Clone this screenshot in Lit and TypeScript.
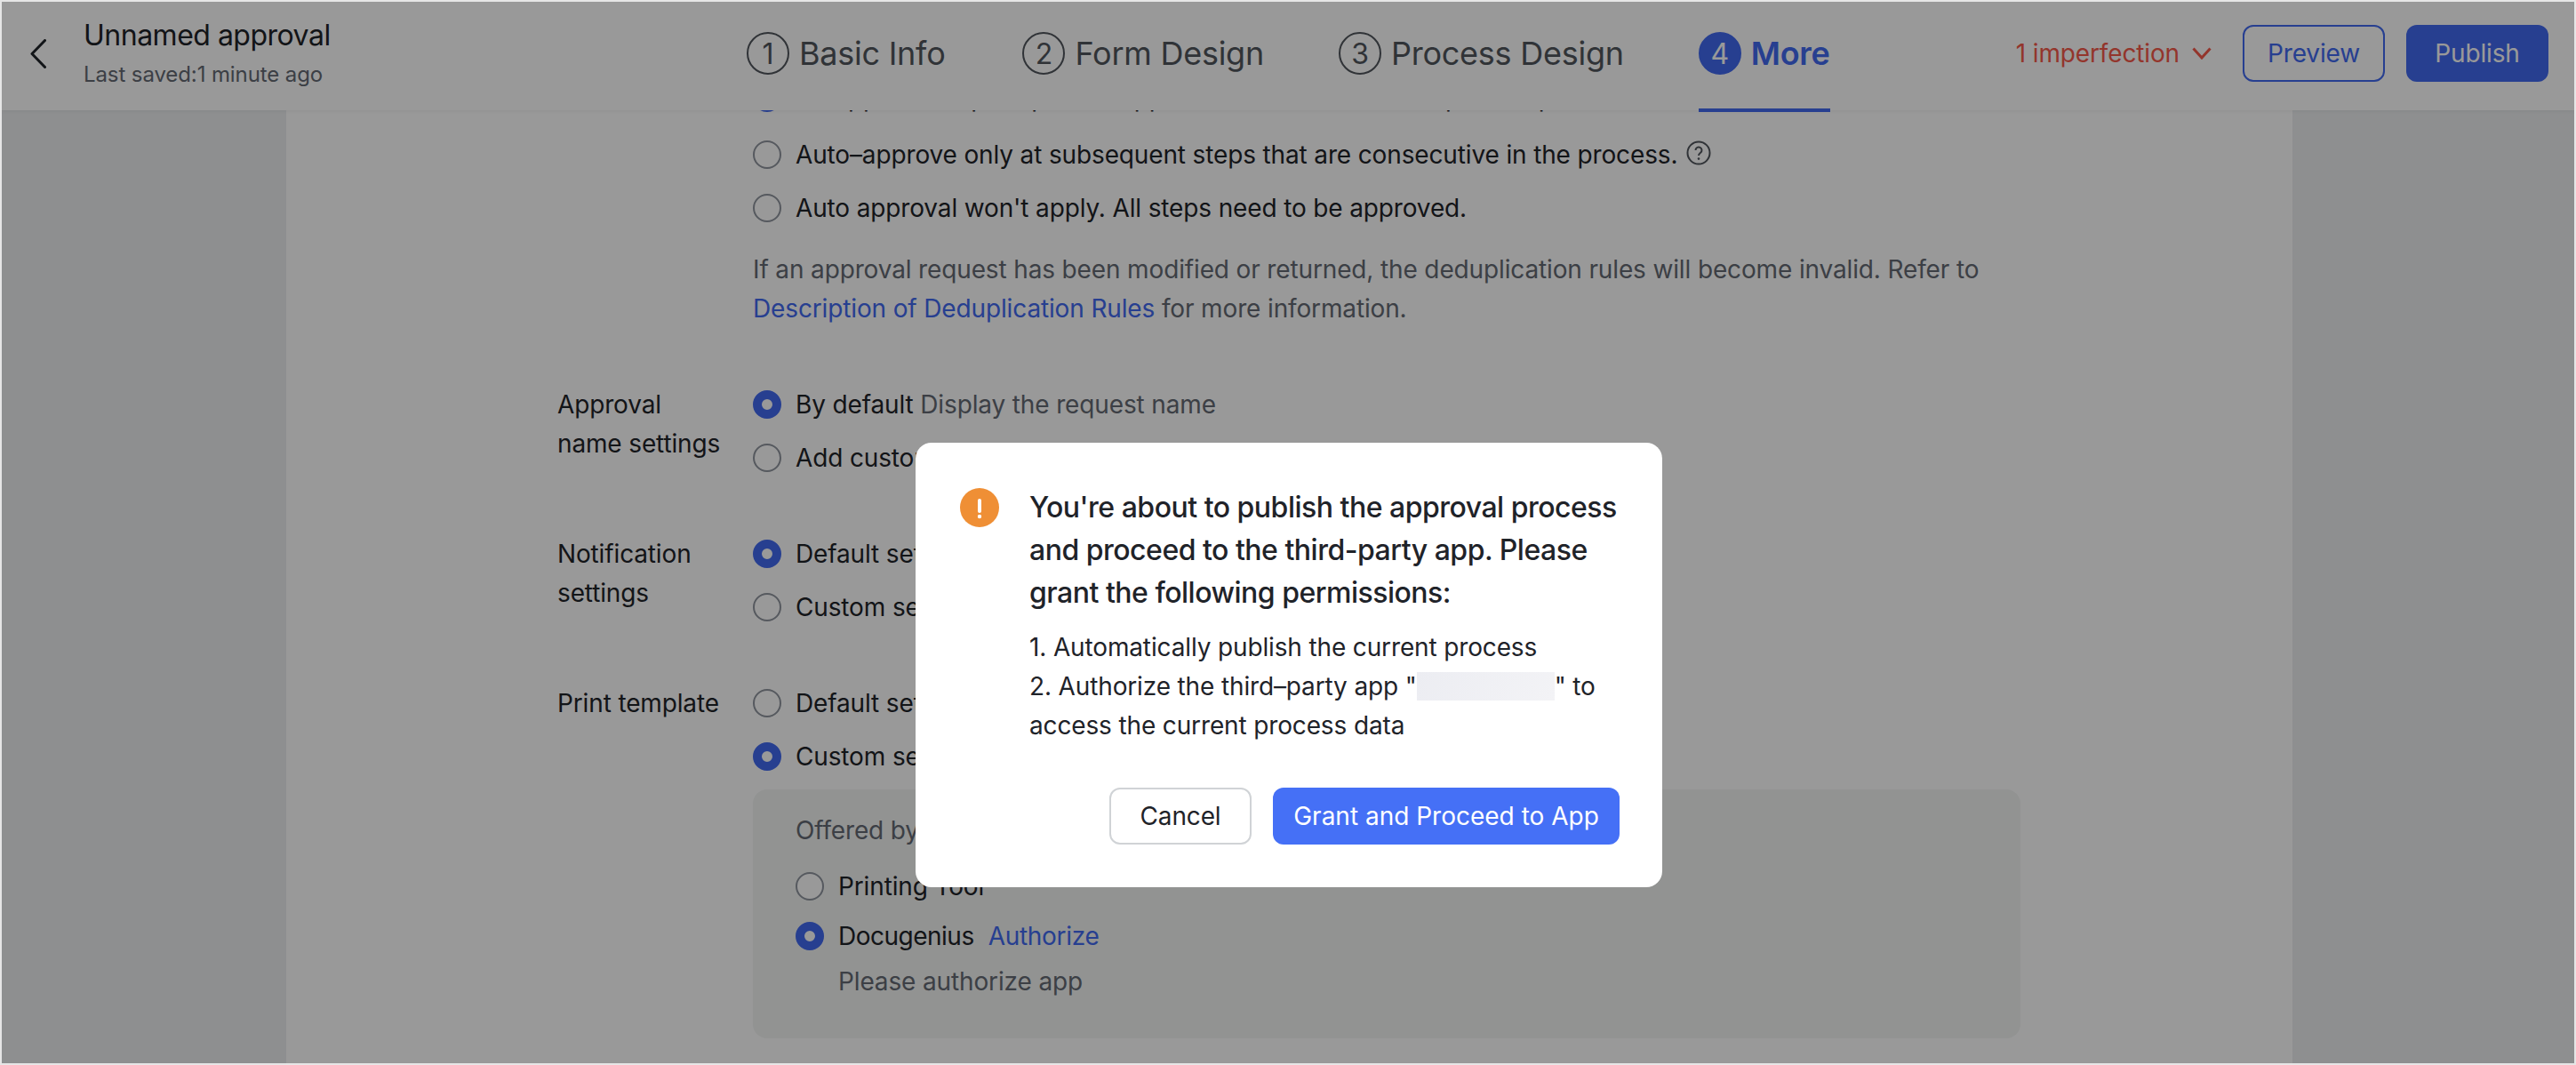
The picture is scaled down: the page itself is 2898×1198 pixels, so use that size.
import { LitElement, html, css } from 'lit';
import { customElement } from 'lit/decorators.js';

const radio = (on = false) => html`<span class="radio ${on ? 'on' : ''}"></span>`;

@customElement('app-root')
export class AppRoot extends LitElement {
  static styles = css`
    :host {
      display: block;
      width: 2898px;
      height: 1198px;
      font-family: Inter, 'Liberation Sans', sans-serif;
      font-size: 28px;
      letter-spacing: -0.14px;
      color: #1f2329;
      background: #fff;
    }
    * { box-sizing: border-box; }
    .page {
      position: relative;
      width: 100%;
      height: 100%;
      border: 2px solid #e6e6e6;
      display: flex;
      flex-direction: column;
      overflow: hidden;
      background: #edeef0;
    }

    /* top bar */
    .bar {
      height: 122px;
      flex: none;
      position: relative;
      z-index: 1;
      background: #fff;
      display: flex;
      align-items: center;
      padding: 0 29px 6px 32px;
      box-shadow: 0 1px 4px rgba(0, 0, 0, 0.06);
    }
    .back { width: 18px; height: 33px; flex: none; }
    .titles { margin-left: 42px; width: 746px; flex: none; }
    .title { font-size: 32px; line-height: 44px; letter-spacing: -0.5px; }
    .saved { font-size: 24px; line-height: 36px; margin-top: 4px; color: #646a73; letter-spacing: -0.1px; }
    .steps { display: flex; align-self: stretch; }
    .step {
      display: flex;
      align-items: center;
      gap: 11px;
      font-size: 36px;
      letter-spacing: -0.25px;
      color: #51565d;
      margin-right: 84px;
      position: relative;
    }
    .step:first-child { margin-right: 87px; }
    .num {
      width: 48px;
      height: 48px;
      border: 2px solid #51565d;
      border-radius: 50%;
      display: flex;
      align-items: center;
      justify-content: center;
      font-size: 32px;
    }
    .step.cur { color: #4169f0; font-weight: 600; margin-right: 0; }
    .step.cur::after {
      content: '';
      position: absolute;
      left: 0;
      right: 0;
      bottom: -8px;
      height: 4px;
      background: #4169f0;
    }
    .step.cur .num { background: #4169f0; border-color: #4169f0; color: #fff; font-weight: 400; }
    .right { margin-left: auto; display: flex; align-items: center; }
    .warn { color: #f5594a; display: flex; align-items: center; gap: 14px; margin-right: 35px; }
    .warn svg { width: 22px; height: 14px; }
    .btn {
      height: 64px;
      border-radius: 12px;
      display: flex;
      align-items: center;
      justify-content: center;
      font-size: 28px;
    }
    .ghost { width: 160px; border: 2px solid #4169f0; color: #4169f0; margin-right: 24px; }
    .solid { width: 160px; background: #4169f0; color: #fff; }

    /* page body */
    .scroll { flex: 1; overflow: hidden; display: flex; padding-left: 320px; min-height: 0; }
    .sheet { width: 2257px; flex: none; background: #fff; padding: 0 0 0 305px; }
    .opts { margin-top: -44px; margin-left: 220px; }
    .line { display: flex; align-items: center; gap: 16px; height: 60px; white-space: nowrap; }
    .line.first { margin-bottom: 4px; }
    .radio { width: 32px; height: 32px; border-radius: 50%; border: 2px solid #8f959e; background: #fff; flex: none; }
    .radio.on { border: 10px solid #4169f0; }
    .help { width: 28px; height: 28px; margin: -4px 0 0 -6px; }
    .note { margin-top: 17px; line-height: 44px; color: #646a73; width: 1400px; }
    a { color: #4169f0; text-decoration: none; }
    .row { display: flex; margin-top: 56px; }
    .row.n { margin-top: 48px; }
    .label { width: 220px; flex: none; line-height: 44px; margin-top: 8px; }
    .muted { color: #646a73; }
    .box {
      width: 1426px;
      height: 280px;
      margin-top: 7px;
      padding: 24px 0 0 48px;
      background: #f3f5f4;
      border-radius: 16px;
    }
    .box .line { height: 56px; }
    .box .top { line-height: 44px; margin-bottom: 13px; }
    .box .sub { margin: 1px 0 0 48px; line-height: 44px; color: #646a73; }
    .doc { letter-spacing: -0.5px; }
    .doc a { margin-left: 16px; letter-spacing: -0.3px; }

    /* dialog */
    .mask { position: absolute; inset: 0; background: rgba(0, 0, 0, 0.4); z-index: 2; }
    .modal {
      position: absolute;
      z-index: 3;
      left: 1028px;
      top: 496px;
      width: 840px;
      height: 500px;
      background: #fff;
      border-radius: 18px;
      padding: 49px 48px 48px 50px;
      display: flex;
      gap: 34px;
    }
    .alert { width: 44px; height: 44px; flex: none; margin-top: 2px; }
    .mbody { flex: 1; min-width: 0; display: flex; flex-direction: column; }
    .mtitle { font-size: 32px; line-height: 48px; font-weight: 500; letter-spacing: -0.5px; }
    .mtext { margin-top: 15px; line-height: 44px; }
    .mask-name { display: inline-block; width: 155px; height: 32px; background: linear-gradient(120deg, #ecedf2, #f3f3f6); vertical-align: -6px; }
    .acts { margin-top: auto; display: flex; justify-content: flex-end; gap: 24px; }
    .cancel { width: 160px; border: 2px solid #d0d3d6; background: #fff; }
    .go { width: 390px; background: #4570f6; color: #fff; letter-spacing: 0; }
  `;

  render() {
    return html`
      <div class="page">
        <div class="bar">
          <svg class="back" viewBox="0 0 18 33"><path d="M16.5 1.5 2 16.5l14.5 15" fill="none" stroke="#1f2329" stroke-width="3" stroke-linecap="round" stroke-linejoin="round"/></svg>
          <div class="titles">
            <div class="title">Unnamed approval</div>
            <div class="saved">Last saved:1 minute ago</div>
          </div>
          <div class="steps">
            <div class="step"><span class="num">1</span>Basic Info</div>
            <div class="step"><span class="num">2</span>Form Design</div>
            <div class="step"><span class="num">3</span>Process Design</div>
            <div class="step cur"><span class="num">4</span>More</div>
          </div>
          <div class="right">
            <div class="warn">1 imperfection
              <svg viewBox="0 0 22 14"><path d="M1.5 1.5 11 12l9.5-10.5" fill="none" stroke="currentColor" stroke-width="3"/></svg>
            </div>
            <div class="btn ghost">Preview</div>
            <div class="btn solid">Publish</div>
          </div>
        </div>
        <div class="scroll">
          <div class="sheet">
            <div class="opts">
              <div class="line first">${radio(true)}An approver is prompted to approve once in the first step in the process.</div>
              <div class="line">${radio()}Auto–approve only at subsequent steps that are consecutive in the process.
                <svg class="help" viewBox="0 0 28 28"><circle cx="14" cy="14" r="12.5" fill="none" stroke="#51565d" stroke-width="2"/><path d="M10.5 11a3.5 3.5 0 1 1 5.6 2.8c-1.3 1-2.1 1.6-2.1 3.2" fill="none" stroke="#51565d" stroke-width="2"/><circle cx="14" cy="20.6" r="1.3" fill="#51565d"/></svg>
              </div>
              <div class="line">${radio()}Auto approval won't apply. All steps need to be approved.</div>
              <div class="note">If an approval request has been modified or returned, the deduplication rules will become invalid. Refer to <a>Description of Deduplication Rules</a> for more information.</div>
            </div>
            <div class="row">
              <div class="label">Approval<br />name settings</div>
              <div>
                <div class="line">${radio(true)}<span>By default <span class="muted">Display the request name</span></span></div>
                <div class="line">${radio()}Add custom name</div>
              </div>
            </div>
            <div class="row n">
              <div class="label">Notification<br />settings</div>
              <div>
                <div class="line">${radio(true)}Default settings</div>
                <div class="line">${radio()}Custom settings</div>
              </div>
            </div>
            <div class="row n">
              <div class="label">Print template</div>
              <div>
                <div class="line">${radio()}Default settings</div>
                <div class="line">${radio(true)}Custom settings</div>
                <div class="box">
                  <div class="top muted">Offered by</div>
                  <div class="line">${radio()}Printing Tool</div>
                  <div class="line">${radio(true)}<span class="doc">Docugenius<a>Authorize</a></span></div>
                  <div class="sub">Please authorize app</div>
                </div>
              </div>
            </div>
          </div>
        </div>
        <div class="mask"></div>
        <div class="modal">
          <svg class="alert" viewBox="0 0 44 44"><circle cx="22" cy="22" r="22" fill="#ef8f35"/><rect x="20" y="12" width="4" height="16" rx="2" fill="#fff"/><circle cx="22" cy="32" r="2.2" fill="#fff"/></svg>
          <div class="mbody">
            <div class="mtitle">You're about to publish the approval process and proceed to the third-party app. Please grant the following permissions:</div>
            <div class="mtext">
              1. Automatically publish the current process<br />
              2. Authorize the third–party app "<span class="mask-name"></span>" to<br />
              access the current process data
            </div>
            <div class="acts">
              <div class="btn cancel">Cancel</div>
              <div class="btn go">Grant and Proceed to App</div>
            </div>
          </div>
        </div>
      </div>
    `;
  }
}
